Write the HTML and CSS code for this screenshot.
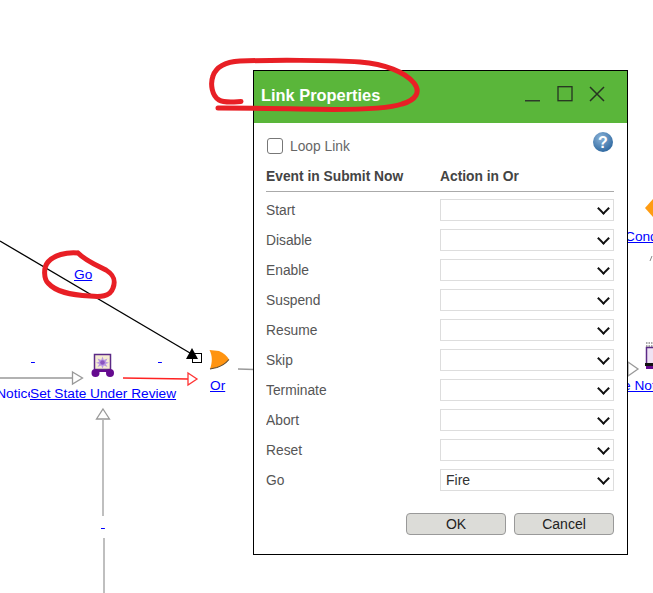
FILE: index.html
```html
<!DOCTYPE html>
<html lang="en">
<head>
<meta charset="utf-8">
<title>Link Properties</title>
<link rel="stylesheet" href="styles.css">
</head>
<body>
<main class="canvas">
  <svg class="wires" width="653" height="593" viewBox="0 0 653 593">
    <line x1="0" y1="241" x2="190" y2="353" stroke="#000" stroke-width="1.300"/>
    <path d="M186 359 L192 348 L198 359 Z" fill="#000"/>
    <rect x="192.500" y="353.500" width="9" height="9" fill="none" stroke="#000"/>
    <line x1="0" y1="378" x2="72" y2="378" stroke="#999" stroke-width="1.500"/>
    <path d="M72.500 372 L82.500 378 L72.500 384 Z" fill="#fff" stroke="#999" stroke-width="1.300"/>
    <line x1="123" y1="378" x2="188" y2="379" stroke="#f22" stroke-width="1.300"/>
    <path d="M188 373 L197 379 L188 385 Z" fill="#fff" stroke="#f33" stroke-width="1.300"/>
    <line x1="238" y1="369" x2="254" y2="369.500" stroke="#999" stroke-width="1.300"/>
    <line x1="103" y1="420" x2="103" y2="516" stroke="#aaa" stroke-width="1.500"/>
    <line x1="104" y1="538" x2="104" y2="593" stroke="#aaa" stroke-width="1.500"/>
    <path d="M103 409 L109.500 419 L96.500 419 Z" fill="#fff" stroke="#999" stroke-width="1.300"/>
    <path d="M628 362 L638 369 L628 376 Z" fill="#fff" stroke="#999" stroke-width="1.300"/>
    <g>
      <rect x="94.500" y="354.500" width="16" height="15" fill="#f5ecd2" stroke="#5b2a86" stroke-width="1.500"/>
      <path d="M102.500 356.500 L103.800 360 L107.500 358.500 L105.800 361.800 L109 362.800 L105.800 364 L107.500 367 L103.800 365.600 L102.500 368.500 L101.200 365.600 L97.500 367 L99.200 364 L96 362.800 L99.200 361.800 L97.500 358.500 L101.200 360 Z" fill="#b998e2"/>
      <circle cx="102.500" cy="362.500" r="2.300" fill="#8a55c0"/>
      <circle cx="95.500" cy="373" r="4" fill="#650a8f"/>
      <circle cx="110" cy="373" r="4" fill="#650a8f"/>
      <rect x="96" y="370" width="13" height="2" fill="#650a8f"/>
    </g>
    <path d="M209.500 350 L219 351 C224 353 227 356 229 359.500 C226 363 222 366 217 367.500 L210 369 C212.500 362 212.500 356 209.500 350 Z" fill="#ff9411"/>
    <path d="M229 359.500 C226 363 222 366 217 367.500 L210 369" fill="none" stroke="#5d4a30" stroke-width="1.100"/>
    <path d="M653 199 L645 208 L653 217 Z" fill="#ff9c12"/>
    <rect x="646.500" y="347.500" width="8" height="18" fill="#efe3f4" stroke="#5b2a86" stroke-width="1.500"/>
    <path d="M646 343 h7 M646 346 h7" stroke="#555" stroke-width="1.200" stroke-dasharray="1.500 1"/>
    <rect x="645" y="363" width="8" height="3" fill="#111"/>
    <rect x="646" y="366" width="7" height="3" fill="#650a8f"/>
    <path d="M652 256 l-2 5" stroke="#888" stroke-width="1"/>
  </svg>

  <a class="link label-dash" style="left:31px;top:348px">&nbsp;</a>
  <a class="link label-dash" style="left:158px;top:348px">&nbsp;</a>
  <a class="link label-dash" style="left:101px;top:514px">&nbsp;</a>
  <a class="link go-label" href="#">Go</a>
  <a class="link clip-left" href="#"><span>Send Notice</span></a>
  <a class="link state-label" href="#">Set State Under Review</a>
  <a class="link or-label" href="#">Or</a>
  <a class="link cond-label" href="#">Condition</a>
  <a class="link not-label" href="#">e Notice</a>

  <section class="dialog">
    <header class="dialog-head">
      <h1 class="dialog-title">Link Properties</h1>
      <div class="window-buttons">
        <svg width="16" height="16" viewBox="0 0 16 16"><rect x="0" y="14" width="15" height="1.500" fill="#2d3a2a"/></svg>
        <svg width="16" height="16" viewBox="0 0 16 16"><rect x="1" y="0.700" width="14" height="14" fill="none" stroke="#263322" stroke-width="1.300"/></svg>
        <svg width="16" height="16" viewBox="0 0 16 16"><path d="M1 1 L15 15 M15 1 L1 15" stroke="#263322" stroke-width="1.500"/></svg>
      </div>
    </header>
    <div class="dialog-body">
      <div class="loop-row">
        <label class="loop"><span class="check"></span>Loop Link</label>
        <svg class="help" width="20" height="20" viewBox="0 0 20 20">
          <defs><radialGradient id="hg" cx="40%" cy="30%" r="75%"><stop offset="0" stop-color="#8db4d8"/><stop offset="1" stop-color="#2a659e"/></radialGradient></defs>
          <circle cx="10" cy="10" r="10" fill="url(#hg)"/>
          <text x="10" y="15.500" text-anchor="middle" class="help-mark">?</text>
        </svg>
      </div>
      <div class="col-head"><span class="col-event">Event in Submit Now</span><span>Action in Or</span></div>
      <div class="rows">
        <div class="row"><span class="row-name">Start</span><span class="select"></span></div>
        <div class="row"><span class="row-name">Disable</span><span class="select"></span></div>
        <div class="row"><span class="row-name">Enable</span><span class="select"></span></div>
        <div class="row"><span class="row-name">Suspend</span><span class="select"></span></div>
        <div class="row"><span class="row-name">Resume</span><span class="select"></span></div>
        <div class="row"><span class="row-name">Skip</span><span class="select"></span></div>
        <div class="row"><span class="row-name">Terminate</span><span class="select"></span></div>
        <div class="row"><span class="row-name">Abort</span><span class="select"></span></div>
        <div class="row"><span class="row-name">Reset</span><span class="select"></span></div>
        <div class="row"><span class="row-name">Go</span><span class="select">Fire</span></div>
      </div>
      <div class="actions">
        <button class="btn" type="button">OK</button>
        <button class="btn" type="button">Cancel</button>
      </div>
    </div>
  </section>

  <svg class="scribbles" width="653" height="593" viewBox="0 0 653 593">
    <path d="M241 101.500 C232 102 224 103 219 100 C212 96 210 84 213 76 C216 67 224 62 240 61 C270 60 330 60 360 62 C385 64 405 72 414 83 C421 92 416 100 402 104 C385 110 340 110 300 109 C270 108 240 108 218 108" fill="none" stroke="#e81f25" stroke-width="5" stroke-linecap="round"/>
    <path d="M78 253 C66 252 54 255 48 262 C43 268 44 279 48 283 C56 292 70 295 90 296 C100 297 110 297 113 288 C116 280 114 275 106 270 C96 265 86 261 78 253" fill="none" stroke="#e81f25" stroke-width="5" stroke-linecap="round"/>
  </svg>
</main>
</body>
</html>
```

FILE: styles.css
```css
html, body {
  margin: 0;
  padding: 0;
  background: #fff;
}
.canvas {
  position: relative;
  width: 653px;
  height: 593px;
  overflow: hidden;
  font-family: "Liberation Sans", Arial, sans-serif;
  font-size: 13.700px;
}
.wires, .scribbles {
  position: absolute;
  left: 0;
  top: 0;
}
.scribbles { pointer-events: none; }
.link {
  position: absolute;
  color: #00f;
  text-decoration: underline;
  line-height: 16px;
  white-space: nowrap;
}
.label-dash { font-size: 14px; }
.go-label { left: 74px; top: 267px; }
.state-label { left: 30px; top: 386px; }
.or-label { left: 210px; top: 378px; }
.cond-label { left: 625px; top: 229px; }
.not-label { left: 628px; top: 378px; width: 25px; overflow: hidden; text-indent: -5px; }
.clip-left {
  left: 0;
  top: 386px;
  width: 30px;
  overflow: hidden;
  direction: rtl;
}
.clip-left span { direction: ltr; unicode-bidi: embed; margin-right: -5px; display: inline-block; }
.dialog {
  position: absolute;
  left: 253px;
  top: 70px;
  width: 373px;
  height: 483px;
  border: 1px solid #000;
  background: #fff;
  display: flex;
  flex-direction: column;
}
.dialog-head {
  height: 52px;
  background: #5ab63a;
  display: flex;
  align-items: center;
  justify-content: space-between;
  padding: 0 22px 0 7px;
  flex: none;
}
.dialog-title {
  margin: -4px 0 0;
  font-size: 16.400px;
  font-weight: bold;
  color: #fff;
}
.window-buttons {
  display: flex;
  gap: 16px;
  margin-top: -7px;
}
.dialog-body {
  padding: 8px 13px 0 12px;
  flex: 1;
  display: flex;
  flex-direction: column;
}
.loop-row {
  display: flex;
  justify-content: space-between;
  align-items: flex-start;
  height: 32px;
}
.loop {
  display: flex;
  align-items: center;
  gap: 7px;
  margin: 8px 0 0 1px;
  color: #666;
  font-size: 13.800px;
  line-height: 16px;
}
.check {
  width: 14px;
  height: 14px;
  margin-top: -2px;
  border: 1px solid #777;
  border-radius: 3px;
  background: #fff;
}
.help { margin: 1px 1px 0 0; }
.help-mark {
  font-family: "Liberation Sans", Arial, sans-serif;
  font-size: 16px;
  font-weight: bold;
  fill: #fff;
}
.col-head {
  display: flex;
  box-sizing: border-box;
  height: 29px;
  padding-top: 6px;
  border-bottom: 1px solid #aaa;
  font-size: 13.800px;
  font-weight: bold;
  color: #444;
  line-height: 16px;
}
.col-event { width: 174px; }
.rows {
  height: 292px;
  overflow: hidden;
  margin-top: 7px;
}
.row {
  display: flex;
  height: 22px;
  margin-bottom: 8px;
  align-items: center;
}
.row-name {
  width: 174px;
  color: #555;
  font-size: 13.800px;
}
.select {
  position: relative;
  box-sizing: border-box;
  width: 174px;
  height: 22px;
  border: 1px solid #ddd;
  background: #fff;
  padding-left: 5px;
  font-size: 14px;
  line-height: 20px;
  color: #333;
}
.select::after {
  content: "";
  position: absolute;
  right: 5px;
  top: 4px;
  width: 7px;
  height: 7px;
  border-right: 2.500px solid #111;
  border-bottom: 2.500px solid #111;
  transform: rotate(45deg);
}
.actions {
  display: flex;
  justify-content: flex-end;
  gap: 8px;
  margin-top: 22px;
}
.btn {
  width: 100px;
  height: 22px;
  padding: 0 0 1px;
  border: 1px solid #999;
  border-radius: 4px;
  background: #dcdcd8;
  color: #222;
  font-family: "Liberation Sans", Arial, sans-serif;
  font-size: 14px;
}
```
